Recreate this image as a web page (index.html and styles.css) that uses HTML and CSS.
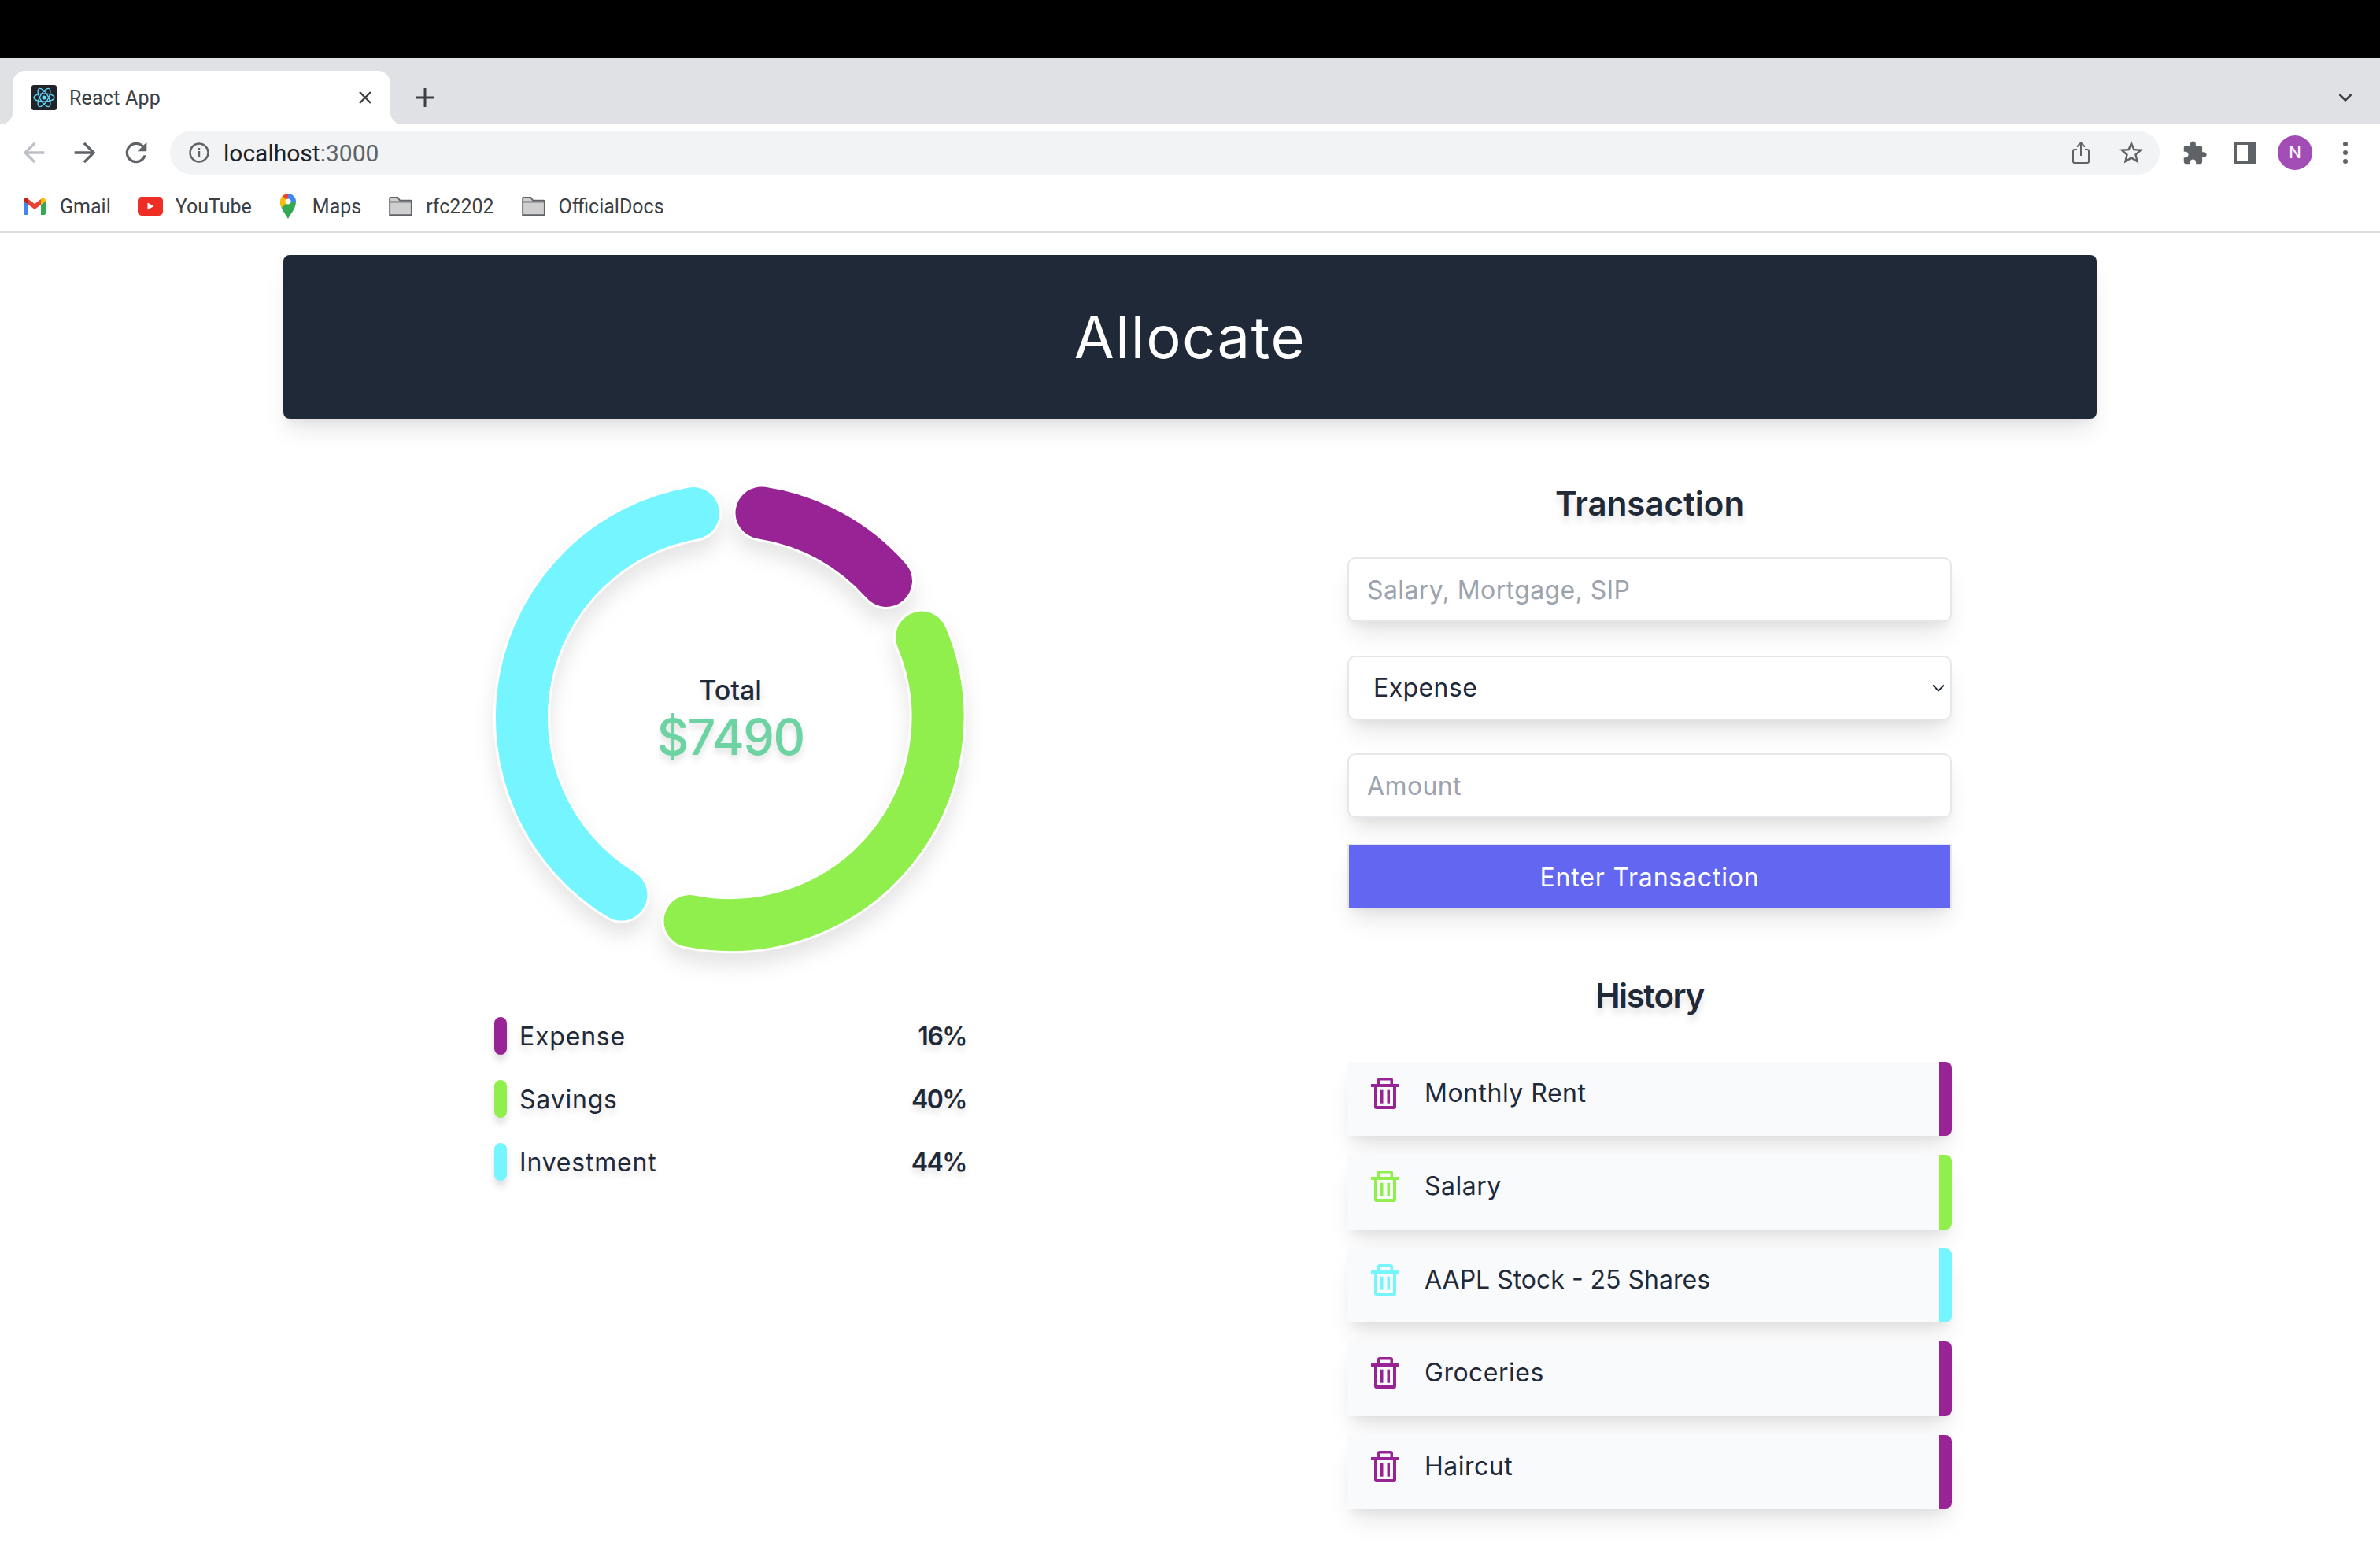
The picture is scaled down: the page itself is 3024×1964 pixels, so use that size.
FILE: index.html
```html
<!DOCTYPE html>
<html>
	<head>
		<meta charset="utf-8">
		<title>React App</title>
		<link rel="stylesheet" href="styles.css">
	</head>
	<body>
		<div class="topbar"></div>

		<div class="tabstrip">
			<div class="tab">
				<svg class="favicon" viewBox="0 0 32 32">
					<rect width="32" height="32" rx="3" fill="#20232a"/>
					<g fill="none" stroke="#61dafb" stroke-width="1.3">
						<ellipse cx="16" cy="16" rx="13" ry="5.2"/>
						<ellipse cx="16" cy="16" rx="13" ry="5.2" transform="rotate(60 16 16)"/>
						<ellipse cx="16" cy="16" rx="13" ry="5.2" transform="rotate(120 16 16)"/>
					</g>
					<circle cx="16" cy="16" r="2.6" fill="#61dafb"/>
				</svg>
				<span class="tab-title">React App</span>
				<svg class="tab-close" viewBox="0 0 18 18"><path d="M2 2l14 14M16 2L2 16" stroke="#3c4043" stroke-width="2.4" fill="none"/></svg>
			</div>
			<svg class="new-tab" viewBox="0 0 24 24"><path d="M12 1v22M1 12h22" stroke="#3c4043" stroke-width="3" stroke-linecap="round" fill="none"/></svg>
			<svg class="tab-caret" viewBox="0 0 18 12"><path d="M1.5 2l7.5 7.5L16.5 2" stroke="#3c4043" stroke-width="2.6" fill="none"/></svg>
		</div>

		<div class="toolbar">
			<svg class="nav-icon" viewBox="0 0 24 24"><path fill="#bdc1c6" d="M20 11H7.83l5.59-5.59L12 4l-8 8 8 8 1.41-1.41L7.83 13H20v-2z"/></svg>
			<svg class="nav-icon" viewBox="0 0 24 24"><path fill="#5f6368" d="M12 4l-1.41 1.41L16.17 11H4v2h12.17l-5.58 5.59L12 20l8-8z"/></svg>
			<svg class="nav-icon" viewBox="0 0 24 24"><path fill="#5f6368" d="M17.65 6.35C16.2 4.9 14.21 4 12 4c-4.42 0-7.99 3.58-7.99 8s3.57 8 7.99 8c3.73 0 6.84-2.55 7.73-6h-2.08c-.82 2.33-3.04 4-5.65 4-3.31 0-6-2.69-6-6s2.69-6 6-6c1.66 0 3.14.69 4.22 1.78L13 11h7V4l-2.35 2.35z"/></svg>
			<div class="omnibox">
				<svg class="info-icon" viewBox="0 0 26 26">
					<circle cx="13" cy="13" r="11.5" fill="none" stroke="#5f6368" stroke-width="2.4"/>
					<rect x="11.8" y="11" width="2.4" height="8" fill="#5f6368"/>
					<rect x="11.8" y="7" width="2.4" height="2.4" fill="#5f6368"/>
				</svg>
				<span class="url">localhost<span class="url-port">:3000</span></span>
				<svg class="share-icon" viewBox="0 0 22 28">
					<path d="M6 10H3a2 2 0 0 0-2 2v13a2 2 0 0 0 2 2h16a2 2 0 0 0 2-2V12a2 2 0 0 0-2-2h-3" fill="none" stroke="#5f6368" stroke-width="2"/>
					<path d="M11 18V2M6 6.5L11 1.5l5 5" fill="none" stroke="#5f6368" stroke-width="2"/>
				</svg>
				<svg class="star-icon" viewBox="0 0 24 24"><path fill="#5f6368" d="M22 9.24l-7.19-.62L12 2 9.19 8.63 2 9.24l5.46 4.73L5.82 21 12 17.27 18.18 21l-1.63-7.03L22 9.24zM12 15.4l-3.76 2.27 1-4.28-3.32-2.88 4.38-.38L12 6.1l1.71 4.04 4.38.38-3.32 2.88 1 4.28L12 15.4z"/></svg>
			</div>
			<svg class="puzzle-icon" viewBox="0 0 24 24"><path fill="#5f6368" d="M20.5 11H19V7c0-1.1-.9-2-2-2h-4V3.5C13 2.12 11.88 1 10.5 1S8 2.12 8 3.5V5H4c-1.1 0-1.99.9-1.99 2v3.8H3.5c1.49 0 2.7 1.21 2.7 2.7s-1.21 2.7-2.7 2.7H2V20c0 1.1.9 2 2 2h3.8v-1.5c0-1.49 1.21-2.7 2.7-2.7 1.49 0 2.7 1.21 2.7 2.7V22H17c1.1 0 2-.9 2-2v-4h1.5c1.38 0 2.5-1.12 2.5-2.5S21.88 11 20.5 11z"/></svg>
			<svg class="side-icon" viewBox="0 0 28 28"><path fill="#5f6368" fill-rule="evenodd" d="M0 0h28v28H0zM4 4v20h14V4z"/></svg>
			<div class="avatar">N</div>
			<svg class="dots-icon" viewBox="0 0 8 30">
				<circle cx="4" cy="4" r="3" fill="#5f6368"/>
				<circle cx="4" cy="15" r="3" fill="#5f6368"/>
				<circle cx="4" cy="26" r="3" fill="#5f6368"/>
			</svg>
		</div>

		<div class="bookmarks">
			<div class="bookmark bookmark-gmail">
				<svg class="bm-icon" viewBox="0 0 28 22">
					<path d="M0 4v16a2 2 0 0 0 2 2h4V9z" fill="#4285f4"/>
					<path d="M28 4v16a2 2 0 0 1-2 2h-4V9z" fill="#34a853"/>
					<path d="M6 9l8 6 8-6V2l-8 6-8-6z" fill="#ea4335"/>
					<path d="M0 4c0-3.5 3.5-4.5 6-2.5V9L0 4.5z" fill="#c5221f"/>
					<path d="M28 4c0-3.5-3.5-4.5-6-2.5V9l6-4.5z" fill="#fbbc04"/>
				</svg>
				<span>Gmail</span>
			</div>
			<div class="bookmark">
				<svg class="bm-icon" viewBox="0 0 32 24">
					<rect width="32" height="24" rx="5" fill="#ee2d24"/>
					<path d="M12.5 7.5l8 4.5-8 4.5z" fill="#fff"/>
				</svg>
				<span>YouTube</span>
			</div>
			<div class="bookmark bookmark-maps">
				<svg class="pin-icon" viewBox="0 0 20 32">
					<path d="M10 32C7 26 0 19 0 10h20c0 9-7 16-10 22z" fill="#34a853"/>
					<path d="M0 10C0 6.5 1.5 4 3.500 2.500L10 10 2 18C.7 15.500 0 13 0 10z" fill="#fbbc04"/>
					<path d="M3 3C5 1 7.5 0 10 0v10z" fill="#ea4335"/>
					<path d="M10 0c5.5 0 10 4.5 10 10H10z" fill="#4285f4"/>
					<circle cx="10" cy="10" r="3.6" fill="#fff"/>
				</svg>
				<span>Maps</span>
			</div>
			<div class="bookmark">
				<svg class="bm-icon" viewBox="0 0 32 26">
					<path d="M1 25V2a1 1 0 0 1 1-1h10l3 4h15a1 1 0 0 1 1 1v19z" fill="#cfcfcf" stroke="#5f6368" stroke-width="2"/>
					<path d="M1 7h30" stroke="#5f6368" stroke-width="2"/>
				</svg>
				<span>rfc2202</span>
			</div>
			<div class="bookmark">
				<svg class="bm-icon" viewBox="0 0 32 26">
					<path d="M1 25V2a1 1 0 0 1 1-1h10l3 4h15a1 1 0 0 1 1 1v19z" fill="#cfcfcf" stroke="#5f6368" stroke-width="2"/>
					<path d="M1 7h30" stroke="#5f6368" stroke-width="2"/>
				</svg>
				<span>OfficialDocs</span>
			</div>
		</div>

		<div class="wrapper">
			<h1 class="title">Allocate</h1>

			<div class="columns">
				<div class="left">
					<div class="chart">
						<svg class="chart-ring" viewBox="0 0 600 600">
							<g fill="none" stroke="#fff" stroke-width="72" stroke-linecap="round">
								<path d="M339.5 39.5A263.5 263.5 0 0 1 498 126"/>
								<path d="M543 197.6A263.5 263.5 0 0 1 248.5 558"/>
								<path d="M161.4 524.6A263.5 263.5 0 0 1 253 40"/>
							</g>
							<g fill="none" stroke-width="66" stroke-linecap="round">
								<path stroke="#982394" d="M339.5 39.5A263.5 263.5 0 0 1 498 126"/>
								<path stroke="#90ef4c" d="M543 197.6A263.5 263.5 0 0 1 248.5 558"/>
								<path stroke="#75f5ff" d="M161.4 524.6A263.5 263.5 0 0 1 253 40"/>
							</g>
						</svg>
						<div class="chart-total">
							<div class="total-label">Total</div>
							<div class="total-value">$7490</div>
						</div>
					</div>

					<div class="legend">
						<div class="legend-row">
							<span class="legend-bar expense"></span>
							<span class="legend-name">Expense</span>
							<span class="legend-pct">16%</span>
						</div>
						<div class="legend-row">
							<span class="legend-bar savings"></span>
							<span class="legend-name">Savings</span>
							<span class="legend-pct">40%</span>
						</div>
						<div class="legend-row">
							<span class="legend-bar investment"></span>
							<span class="legend-name">Investment</span>
							<span class="legend-pct">44%</span>
						</div>
					</div>
				</div>

				<div class="right">
					<h2 class="section-title">Transaction</h2>
					<form class="form">
						<input class="field" type="text" placeholder="Salary, Mortgage, SIP">
						<div class="select-wrap">
							<select class="field field-select">
								<option>Expense</option>
								<option>Savings</option>
								<option>Investment</option>
							</select>
							<svg class="select-arrow" viewBox="0 0 16 10"><path d="M1 1.5l7 7 7-7" fill="none" stroke="#1f2937" stroke-width="1.8"/></svg>
						</div>
						<input class="field" type="text" placeholder="Amount">
						<button class="submit" type="button">Enter Transaction</button>
					</form>

					<h2 class="section-title history-title">History</h2>
					<div class="history">
						<div class="item expense">
							<svg class="trash" viewBox="0 0 36 40"><use href="#trash-shape"/></svg>
							<span>Monthly Rent</span>
						</div>
						<div class="item savings">
							<svg class="trash" viewBox="0 0 36 40"><use href="#trash-shape"/></svg>
							<span>Salary</span>
						</div>
						<div class="item investment">
							<svg class="trash" viewBox="0 0 36 40"><use href="#trash-shape"/></svg>
							<span class="item-tight">AAPL Stock - 25 Shares</span>
						</div>
						<div class="item expense">
							<svg class="trash" viewBox="0 0 36 40"><use href="#trash-shape"/></svg>
							<span>Groceries</span>
						</div>
						<div class="item expense">
							<svg class="trash" viewBox="0 0 36 40"><use href="#trash-shape"/></svg>
							<span>Haircut</span>
						</div>
					</div>
				</div>
			</div>
		</div>

		<svg class="defs" width="0" height="0">
			<symbol id="trash-shape" viewBox="0 0 36 40">
				<path fill="currentColor" fill-rule="evenodd" d="M11 0h14a3 3 0 0 1 3 3v5h8v4h-4v25a3 3 0 0 1-3 3H7a3 3 0 0 1-3-3V12H0V8h8V3a3 3 0 0 1 3-3zM11.5 3.5V8h13V3.5zM8 12v24h20V12z"/>
				<rect fill="currentColor" x="12" y="15.7" width="3.5" height="17"/>
				<rect fill="currentColor" x="20.5" y="15.7" width="3.5" height="17"/>
			</symbol>
		</svg>
	</body>
</html>
```

FILE: styles.css
```css
body {
	margin: 0;
	background: #fff;
	color: #1f2937;
	font-family: Inter, "Liberation Sans", sans-serif;
}

/* browser window */
.topbar {
	height: 74px;
	background: #000;
}
.tabstrip {
	display: flex;
	align-items: flex-start;
	height: 84px;
	padding-top: 16px;
	box-sizing: border-box;
	background: #dfe1e5;
}
.tab {
	position: relative;
	display: flex;
	align-items: center;
	box-sizing: border-box;
	width: 480px;
	height: 68px;
	margin-left: 16px;
	padding: 0 23px 0 24px;
	background: #fff;
	border-radius: 16px 16px 0 0;
}
.tab::before, .tab::after {
	content: "";
	position: absolute;
	bottom: 0;
	width: 16px;
	height: 16px;
}
.tab::before {
	left: -16px;
	background: radial-gradient(circle at 0 0, #dfe1e5 16px, #fff 16.5px);
}
.tab::after {
	right: -16px;
	background: radial-gradient(circle at 100% 0, #dfe1e5 16px, #fff 16.5px);
}
.favicon {
	width: 32px;
	height: 32px;
	flex: none;
}
.tab-title {
	margin-left: 16px;
	font: 25px Roboto, sans-serif;
	letter-spacing: 0.2px;
	color: #3c4043;
}
.tab-close {
	width: 18px;
	height: 18px;
	margin-left: auto;
}
.new-tab {
	width: 24px;
	height: 24px;
	margin: 22px 0 0 32px;
}
.tab-caret {
	width: 18px;
	height: 12px;
	margin: 28px 35px 0 auto;
}

.toolbar {
	display: flex;
	align-items: center;
	height: 72px;
	padding-left: 23px;
}
.nav-icon {
	width: 40px;
	height: 40px;
	margin-right: 25px;
	flex: none;
}
.omnibox {
	display: flex;
	align-items: center;
	box-sizing: border-box;
	width: 2528px;
	height: 56px;
	margin-left: -2px;
	padding: 0 18px 0 24px;
	background: #f1f3f4;
	border-radius: 28px;
}
.info-icon {
	width: 26px;
	height: 26px;
}
.url {
	margin-left: 18px;
	font: 30px Roboto, sans-serif;
	color: #202124;
}
.url-port {
	color: #5f6368;
}
.share-icon {
	width: 22px;
	height: 28px;
	margin-left: auto;
}
.star-icon {
	width: 36px;
	height: 36px;
	margin-left: 35px;
}
.puzzle-icon {
	width: 33px;
	height: 33px;
	margin-left: 28px;
}
.side-icon {
	width: 28px;
	height: 28px;
	margin-left: 33px;
}
.avatar {
	width: 44px;
	height: 44px;
	margin-left: 28px;
	background: #a24db5;
	border-radius: 50%;
	color: #fff;
	font: 22px/44px Roboto, sans-serif;
	text-align: center;
}
.dots-icon {
	width: 8px;
	height: 30px;
	margin-left: 38px;
}

.bookmarks {
	display: flex;
	align-items: center;
	gap: 34px;
	height: 64px;
	padding-left: 30px;
	border-bottom: 2px solid #dadce0;
	font: 25px Roboto, sans-serif;
	color: #3c4043;
}
.bookmark {
	display: flex;
	align-items: center;
	gap: 16px;
}
.bookmark-gmail {
	gap: 18px;
}
.bookmark-maps {
	gap: 21px;
	padding-left: 2px;
}
.bm-icon {
	height: 24px;
	width: 32px;
}
.bookmark-gmail .bm-icon {
	width: 28px;
}
.pin-icon {
	width: 20px;
	height: 32px;
}

/* page */
.wrapper {
	width: 2304px;
	margin: 28px auto 0;
	padding-bottom: 40px;
}
.title {
	margin: 0;
	height: 208px;
	background: #1f2937;
	border-radius: 8px;
	box-shadow: 0 20px 30px -6px rgba(0, 0, 0, 0.1), 0 8px 12px -4px rgba(0, 0, 0, 0.05);
	color: #fff;
	font-size: 74px;
	font-weight: 400;
	line-height: 208px;
	letter-spacing: 1.5px;
	text-align: center;
}
.columns {
	display: grid;
	grid-template-columns: 1fr 1fr;
	gap: 32px;
}
.left {
	display: flex;
	flex-direction: column;
	align-items: center;
}
.right {
	display: flex;
	flex-direction: column;
	align-items: center;
}

.chart {
	position: relative;
	width: 600px;
	height: 600px;
	margin-top: 80px;
}
.chart-ring {
	display: block;
	width: 600px;
	height: 600px;
	overflow: visible;
	filter: drop-shadow(0 16px 12px rgba(0, 0, 0, 0.1));
}
.chart-total {
	position: absolute;
	top: 242px;
	left: 0;
	right: 0;
	text-align: center;
}
.total-label {
	font-size: 34px;
	font-weight: 500;
	line-height: 46px;
	text-shadow: 0 6px 8px rgba(0, 0, 0, 0.12);
}
.total-value {
	color: #6dd3a3;
	font-size: 63px;
	font-weight: 500;
	line-height: 72px;
	letter-spacing: -1.5px;
	text-shadow: 0 6px 8px rgba(0, 0, 0, 0.12);
}

.legend {
	display: flex;
	flex-direction: column;
	gap: 32px;
	width: 600px;
	margin-top: 80px;
}
.legend-row {
	display: flex;
	align-items: center;
	height: 48px;
	font-size: 32px;
	text-shadow: 0 6px 8px rgba(0, 0, 0, 0.12);
}
.legend-bar {
	width: 16px;
	height: 48px;
	margin-right: 16px;
	border-radius: 8px;
	box-shadow: 0 8px 8px rgba(0, 0, 0, 0.12);
}
.legend-bar.expense {
	background: #982394;
}
.legend-bar.savings {
	background: #90ef4c;
}
.legend-bar.investment {
	background: #75f5ff;
}
.legend-name {
	letter-spacing: 0.8px;
}
.legend-pct {
	margin-left: auto;
	font-weight: 600;
	letter-spacing: -1.5px;
}

.section-title {
	margin: 80px 0 0;
	height: 56px;
	font-size: 42px;
	font-weight: 600;
	line-height: 56px;
	text-shadow: 0 8px 8px rgba(0, 0, 0, 0.12);
}
.form {
	display: flex;
	flex-direction: column;
	width: 768px;
	margin-top: 40px;
}
.field {
	display: block;
	box-sizing: border-box;
	width: 100%;
	height: 82px;
	margin: 0 0 42.5px;
	padding: 0 23px;
	background: #fff;
	border: 2px solid #e5e7eb;
	border-radius: 10px;
	box-shadow: 0 20px 30px -6px rgba(0, 0, 0, 0.1), 0 8px 12px -4px rgba(0, 0, 0, 0.05);
	color: #1f2937;
	font-family: inherit;
	font-size: 32px;
	letter-spacing: 0.4px;
	outline: none;
}
.field::placeholder {
	color: #9ca3af;
}
.select-wrap {
	position: relative;
}
.field-select {
	padding-left: 31px;
	appearance: none;
}
.select-arrow {
	position: absolute;
	top: 36px;
	right: 9px;
	width: 16px;
	height: 10px;
	pointer-events: none;
}
.submit {
	height: 82px;
	margin-top: -9.5px;
	background: #6366f1;
	border: 2px solid #e5e7eb;
	border-bottom: 0;
	box-shadow: 0 20px 30px -6px rgba(0, 0, 0, 0.1), 0 8px 12px -4px rgba(0, 0, 0, 0.05);
	color: #fff;
	font-family: inherit;
	font-size: 32px;
	letter-spacing: 0.8px;
}

.history-title {
	margin-top: 82.5px;
	letter-spacing: -1.4px;
}
.history {
	display: flex;
	flex-direction: column;
	gap: 24px;
	width: 768px;
	margin-top: 56px;
}
.item {
	display: flex;
	align-items: flex-start;
	box-sizing: border-box;
	height: 94.5px;
	padding: 20px 0 0 30px;
	background: #f9fafb;
	border-right: 16px solid;
	border-radius: 0 8px 8px 0;
	box-shadow: 0 20px 30px -6px rgba(0, 0, 0, 0.1), 0 8px 12px -4px rgba(0, 0, 0, 0.05);
	font-size: 32px;
	line-height: 40px;
	letter-spacing: 0.5px;
}
.item-tight {
	letter-spacing: 0;
}
.item.expense {
	border-right-color: #982394;
}
.item.savings {
	border-right-color: #90ef4c;
}
.item.investment {
	border-right-color: #75f5ff;
}
.item.expense .trash {
	color: #982394;
}
.item.savings .trash {
	color: #90ef4c;
}
.item.investment .trash {
	color: #75f5ff;
}
.trash {
	width: 36px;
	height: 40px;
	margin-right: 32px;
	flex: none;
}
.defs {
	position: absolute;
}
```
